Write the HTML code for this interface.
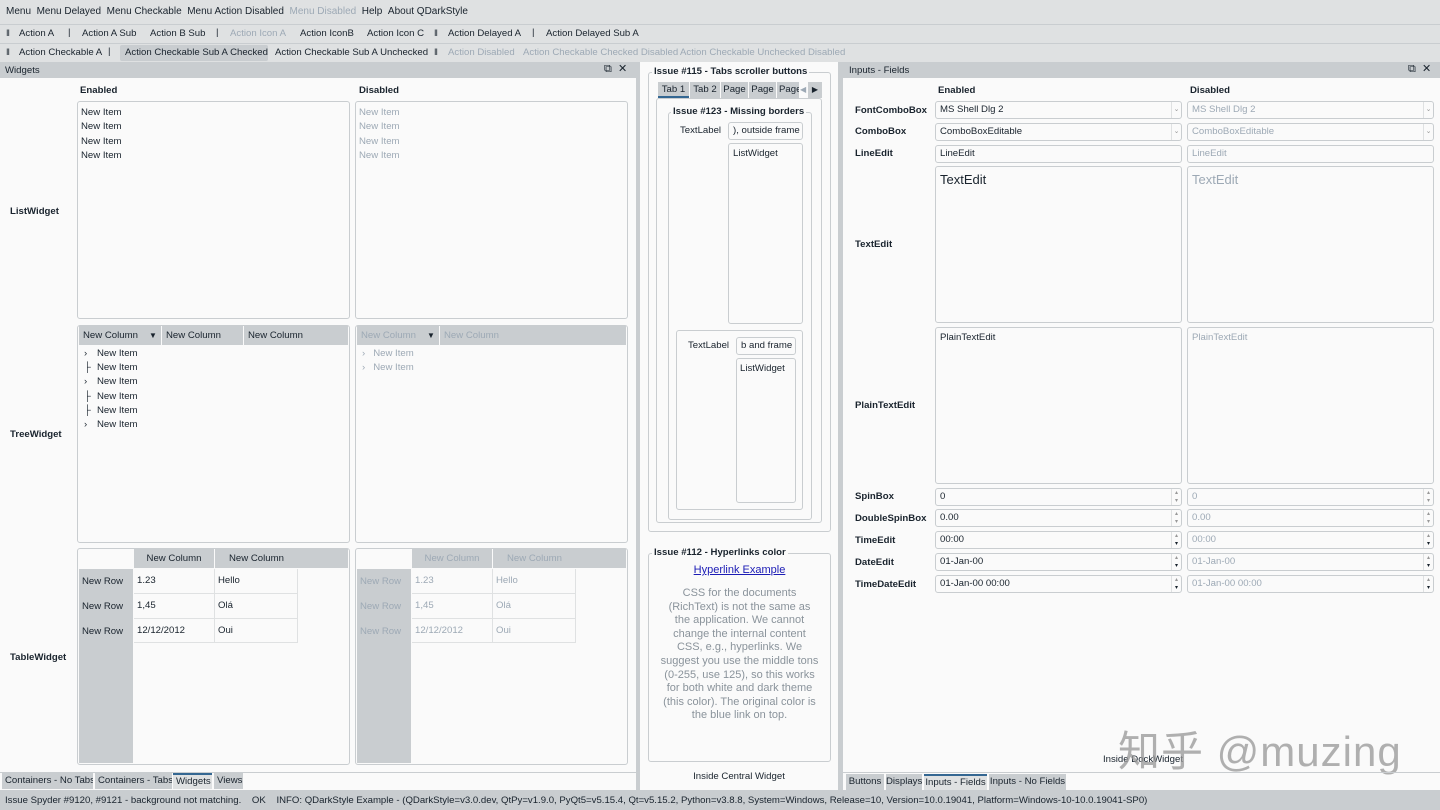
<!DOCTYPE html>
<html><head><meta charset="utf-8"><style>
*{box-sizing:border-box;margin:0;padding:0}
body{width:1440px;height:810px;position:relative;background:#fafafa;font-family:"Liberation Sans","DejaVu Sans",sans-serif;font-size:9.6px;color:#19232d;overflow:hidden}
.a{position:absolute;white-space:nowrap}
.bx{position:absolute;border:1px solid #c9cdd0;border-radius:3px;background:#fafafa}
.b{font-weight:bold}
.d{color:#9da9b5}
.hd{position:absolute;background:#c9cdd0;height:19px;line-height:19px;padding-left:4px}
.cell{position:absolute;border-right:1px solid #dfe1e2;border-bottom:1px solid #dfe1e2;padding-left:3px;line-height:24px}
.fld{position:absolute;border:1px solid #c9cdd0;border-radius:3px;height:18px;line-height:16px;padding-left:4px;background:#fafafa;overflow:hidden}
.sp{position:absolute;right:0;top:0;width:10px;height:16px;border-left:1px solid #dfe1e2;font-size:6px;color:#999;text-align:center;line-height:8px}
.tab{position:absolute;background:#c9cdd0;height:16px;line-height:16px;padding:0 3px;top:0;overflow:hidden;text-align:center}
.on{background:#dfe1e2;border-top:2px solid #346792;line-height:14px}
</style></head><body>
<div class="a" style="left:0;top:0;width:1440px;height:24px;background:#dfe1e2"></div>
<div class="a" style="left:6px;top:6px;font-size:10px">Menu&nbsp;&nbsp;Menu Delayed&nbsp;&nbsp;Menu Checkable&nbsp;&nbsp;Menu Action Disabled&nbsp;&nbsp;<span class="d">Menu Disabled</span>&nbsp;&nbsp;Help&nbsp;&nbsp;About QDarkStyle</div>
<div class="a" style="left:0;top:24px;width:1440px;height:38px;background:#dfe1e2;border-top:1px solid #c9cdd0"></div>
<div class="a" style="left:0;top:43px;width:1440px;height:1px;background:#c9cdd0"></div>
<div class="a" style="left:6px;top:28px">‖</div>
<div class="a" style="left:19px;top:28px">Action A</div>
<div class="a" style="left:68px;top:27px">|</div>
<div class="a" style="left:82px;top:28px">Action A Sub</div>
<div class="a" style="left:150px;top:28px">Action B Sub</div>
<div class="a" style="left:216px;top:27px">|</div>
<div class="a d" style="left:230px;top:28px">Action Icon A</div>
<div class="a" style="left:300px;top:28px">Action IconB</div>
<div class="a" style="left:367px;top:28px">Action Icon C</div>
<div class="a" style="left:434px;top:28px">‖</div>
<div class="a" style="left:448px;top:28px">Action Delayed A</div>
<div class="a" style="left:532px;top:27px">|</div>
<div class="a" style="left:546px;top:28px">Action Delayed Sub A</div>
<div class="a" style="left:120px;top:45px;width:148px;height:16px;background:#c9cdd0;border-radius:2px"></div>
<div class="a" style="left:6px;top:47px">‖</div>
<div class="a" style="left:19px;top:47px">Action Checkable A</div>
<div class="a" style="left:108px;top:46px">|</div>
<div class="a" style="left:125px;top:47px">Action Checkable Sub A Checked</div>
<div class="a" style="left:275px;top:47px">Action Checkable Sub A Unchecked</div>
<div class="a" style="left:434px;top:47px">‖</div>
<div class="a d" style="left:448px;top:47px">Action Disabled</div>
<div class="a d" style="left:523px;top:47px">Action Checkable Checked Disabled</div>
<div class="a d" style="left:680px;top:47px">Action Checkable Unchecked Disabled</div>
<div class="a" style="left:0;top:62px;width:636px;height:16px;background:#c9cdd0"></div>
<div class="a" style="left:5px;top:65px">Widgets</div>
<div class="a" style="left:604px;top:62px;font-size:11px">⧉&nbsp;&nbsp;✕</div>
<div class="a" style="left:636px;top:62px;width:4px;height:728px;background:#c9cdd0"></div>
<div class="a" style="left:838px;top:62px;width:5px;height:728px;background:#c9cdd0"></div>
<div class="a" style="left:843px;top:62px;width:597px;height:16px;background:#c9cdd0"></div>
<div class="a" style="left:849px;top:65px">Inputs - Fields</div>
<div class="a" style="left:1408px;top:62px;font-size:11px">⧉&nbsp;&nbsp;✕</div>
<div class="a b" style="left:80px;top:85px">Enabled</div>
<div class="a b" style="left:359px;top:85px">Disabled</div>
<div class="a b" style="left:10px;top:206px">ListWidget</div>
<div class="a b" style="left:10px;top:429px">TreeWidget</div>
<div class="a b" style="left:10px;top:652px">TableWidget</div>
<div class="bx" style="left:77px;top:101px;width:273px;height:218px"></div>
<div class="a" style="left:81px;top:106px;line-height:14.3px">New Item<br>New Item<br>New Item<br>New Item</div>
<div class="bx" style="left:355px;top:101px;width:273px;height:218px"></div>
<div class="a d" style="left:359px;top:106px;line-height:14.3px">New Item<br>New Item<br>New Item<br>New Item</div>
<div class="bx" style="left:77px;top:325px;width:273px;height:218px"></div>
<div class="hd" style="left:79px;top:326px;width:82px">New Column <span style="position:absolute;left:70px;font-size:8px">▼</span></div>
<div class="hd" style="left:162px;top:326px;width:81px">New Column</div>
<div class="hd" style="left:244px;top:326px;width:104px">New Column</div>
<div class="a" style="left:84px;top:347px;line-height:14.2px">›<br>├<br>›<br>├<br>├<br>›</div>
<div class="a" style="left:97px;top:347px;line-height:14.2px">New Item<br>New Item<br>New Item<br>New Item<br>New Item<br>New Item</div>
<div class="bx" style="left:355px;top:325px;width:273px;height:218px"></div>
<div class="hd d" style="left:357px;top:326px;width:82px">New Column <span style="position:absolute;left:70px;font-size:8px;color:#19232d">▼</span></div>
<div class="hd d" style="left:440px;top:326px;width:186px">New Column</div>
<div class="a d" style="left:362px;top:347px;line-height:14.2px">›&nbsp;&nbsp;&nbsp;New Item<br>›&nbsp;&nbsp;&nbsp;New Item</div>
<div class="bx" style="left:77px;top:548px;width:273px;height:217px"></div>
<div class="a" style="left:79px;top:569px;width:54px;height:194px;background:#c9cdd0"></div>
<div class="hd" style="left:134px;top:549px;width:80px;text-align:center;padding:0">New Column</div>
<div class="hd" style="left:215px;top:549px;width:133px;padding-left:14px">New Column</div>
<div class="a" style="left:82px;top:569px;line-height:25px">New Row<br>New Row<br>New Row</div>
<div class="cell" style="left:134px;top:569px;width:81px;height:25px">1.23</div>
<div class="cell" style="left:215px;top:569px;width:83px;height:25px">Hello</div>
<div class="cell" style="left:134px;top:594px;width:81px;height:25px">1,45</div>
<div class="cell" style="left:215px;top:594px;width:83px;height:25px">Olá</div>
<div class="cell" style="left:134px;top:619px;width:81px;height:24px">12/12/2012</div>
<div class="cell" style="left:215px;top:619px;width:83px;height:24px">Oui</div>
<div class="bx" style="left:355px;top:548px;width:273px;height:217px"></div>
<div class="a" style="left:357px;top:569px;width:54px;height:194px;background:#c9cdd0"></div>
<div class="hd d" style="left:412px;top:549px;width:80px;text-align:center;padding:0">New Column</div>
<div class="hd d" style="left:493px;top:549px;width:133px;padding-left:14px">New Column</div>
<div class="a d" style="left:360px;top:569px;line-height:25px">New Row<br>New Row<br>New Row</div>
<div class="cell d" style="left:412px;top:569px;width:81px;height:25px">1.23</div>
<div class="cell d" style="left:493px;top:569px;width:83px;height:25px">Hello</div>
<div class="cell d" style="left:412px;top:594px;width:81px;height:25px">1,45</div>
<div class="cell d" style="left:493px;top:594px;width:83px;height:25px">Olá</div>
<div class="cell d" style="left:412px;top:619px;width:81px;height:24px">12/12/2012</div>
<div class="cell d" style="left:493px;top:619px;width:83px;height:24px">Oui</div>
<div class="a" style="left:0;top:772px;width:636px;height:1px;background:#c9cdd0"></div>
<div class="a" style="left:0;top:773px;height:17px;width:636px">
<div class="tab" style="left:2px;width:91px">Containers - No Tabs</div>
<div class="tab" style="left:95px;width:77px">Containers - Tabs</div>
<div class="tab on" style="left:173px;width:39px">Widgets</div>
<div class="tab" style="left:214px;width:29px">Views</div></div>
<!-- middle -->
<div class="bx" style="left:648px;top:72px;width:183px;height:460px"></div>
<div class="a b" style="left:652px;top:66px;background:#fafafa;padding:0 2px">Issue #115 - Tabs scroller buttons</div>
<div class="a" style="left:658px;top:82px;height:16px;width:165px">
<div class="tab" style="left:0;width:31px;border-bottom:2px solid #346792;line-height:15px">Tab 1</div>
<div class="tab" style="left:32px;width:30px">Tab 2</div>
<div class="tab" style="left:63px;width:27px;padding:0">Page</div>
<div class="tab" style="left:91px;width:27px;padding:0">Page</div>
<div class="tab" style="left:119px;width:22px;padding:0 0 0 2px;text-align:left">Page</div>
<div class="a d" style="left:142px;top:0;font-size:8px;line-height:16px">◀</div>
<div class="a" style="left:150px;top:0;width:14px;height:16px;background:#c9cdd0;font-size:8px;line-height:16px;text-align:center">▶</div></div>
<div class="bx" style="left:656px;top:98px;width:166px;height:425px"></div>
<div class="bx" style="left:668px;top:112px;width:144px;height:408px"></div>
<div class="a b" style="left:671px;top:106px;background:#fafafa;padding:0 2px">Issue #123 - Missing borders</div>
<div class="a" style="left:680px;top:125px">TextLabel</div>
<div class="fld" style="left:728px;top:122px;width:75px">), outside frame</div>
<div class="bx" style="left:728px;top:143px;width:75px;height:181px"></div>
<div class="a" style="left:733px;top:148px">ListWidget</div>
<div class="bx" style="left:676px;top:330px;width:127px;height:180px"></div>
<div class="a" style="left:688px;top:340px">TextLabel</div>
<div class="fld" style="left:736px;top:337px;width:60px">b and frame</div>
<div class="bx" style="left:736px;top:358px;width:60px;height:145px"></div>
<div class="a" style="left:740px;top:363px">ListWidget</div>
<div class="bx" style="left:648px;top:553px;width:183px;height:209px"></div>
<div class="a b" style="left:652px;top:547px;background:#fafafa;padding:0 2px">Issue #112 - Hyperlinks color</div>
<div class="a" style="left:648px;top:564px;width:183px;text-align:center;font-size:11px;text-decoration:underline;color:#1b1bb5">Hyperlink Example</div>
<div class="a" style="left:660px;top:587px;width:159px;text-align:center;white-space:normal;font-size:11px;line-height:13.6px;color:#8a939b">CSS for the documents (RichText) is not the same as the application. We cannot change the internal content CSS, e.g., hyperlinks. We suggest you use the middle tons (0-255, use 125), so this works for both white and dark theme (this color). The original color is the blue link on top.</div>
<div class="a" style="left:640px;top:771px;width:198px;text-align:center">Inside Central Widget</div>
<!-- right dock -->
<div class="a b" style="left:938px;top:85px">Enabled</div>
<div class="a b" style="left:1190px;top:85px">Disabled</div>
<div class="a b" style="left:855px;top:105px">FontComboBox</div>
<div class="a b" style="left:855px;top:126px">ComboBox</div>
<div class="a b" style="left:855px;top:148px">LineEdit</div>
<div class="a b" style="left:855px;top:239px">TextEdit</div>
<div class="a b" style="left:855px;top:400px">PlainTextEdit</div>
<div class="a b" style="left:855px;top:491px">SpinBox</div>
<div class="a b" style="left:855px;top:513px">DoubleSpinBox</div>
<div class="a b" style="left:855px;top:535px">TimeEdit</div>
<div class="a b" style="left:855px;top:557px">DateEdit</div>
<div class="a b" style="left:855px;top:579px">TimeDateEdit</div>
<div class="fld" style="left:935px;top:101px;width:247px">MS Shell Dlg 2<span class="sp" style="font-size:7px;line-height:16px">⌄</span></div>
<div class="fld" style="left:935px;top:123px;width:247px">ComboBoxEditable<span class="sp" style="font-size:7px;line-height:16px">⌄</span></div>
<div class="fld" style="left:935px;top:145px;width:247px">LineEdit</div>
<div class="bx" style="left:935px;top:166px;width:247px;height:157px"></div>
<div class="a" style="left:940px;top:172px;font-size:13px">TextEdit</div>
<div class="bx" style="left:935px;top:327px;width:247px;height:157px"></div>
<div class="a" style="left:940px;top:332px">PlainTextEdit</div>
<div class="fld d" style="left:1187px;top:101px;width:247px">MS Shell Dlg 2<span class="sp" style="font-size:7px;line-height:16px">⌄</span></div>
<div class="fld d" style="left:1187px;top:123px;width:247px">ComboBoxEditable<span class="sp" style="font-size:7px;line-height:16px">⌄</span></div>
<div class="fld d" style="left:1187px;top:145px;width:247px">LineEdit</div>
<div class="bx" style="left:1187px;top:166px;width:247px;height:157px"></div>
<div class="a d" style="left:1192px;top:172px;font-size:13px">TextEdit</div>
<div class="bx" style="left:1187px;top:327px;width:247px;height:157px"></div>
<div class="a d" style="left:1192px;top:332px">PlainTextEdit</div>
<div class="fld" style="left:935px;top:488px;width:247px">0<span class="sp">▴<br>▾</span></div>
<div class="fld" style="left:935px;top:509px;width:247px">0.00<span class="sp">▴<br>▾</span></div>
<div class="fld" style="left:935px;top:531px;width:247px">00:00<span class="sp">▴<br><b style="color:#19232d">▾</b></span></div>
<div class="fld" style="left:935px;top:553px;width:247px">01-Jan-00<span class="sp">▴<br><b style="color:#19232d">▾</b></span></div>
<div class="fld" style="left:935px;top:575px;width:247px">01-Jan-00 00:00<span class="sp">▴<br><b style="color:#19232d">▾</b></span></div>
<div class="fld d" style="left:1187px;top:488px;width:247px">0<span class="sp">▴<br>▾</span></div>
<div class="fld d" style="left:1187px;top:509px;width:247px">0.00<span class="sp">▴<br>▾</span></div>
<div class="fld d" style="left:1187px;top:531px;width:247px">00:00<span class="sp">▴<br><b style="color:#19232d">▾</b></span></div>
<div class="fld d" style="left:1187px;top:553px;width:247px">01-Jan-00<span class="sp">▴<br><b style="color:#19232d">▾</b></span></div>
<div class="fld d" style="left:1187px;top:575px;width:247px">01-Jan-00 00:00<span class="sp">▴<br><b style="color:#19232d">▾</b></span></div>
<div class="a" style="left:1103px;top:754px">Inside DockWidget</div>
<div class="a" style="left:1118px;top:718px;font-size:42px;letter-spacing:1px;color:rgba(150,150,150,0.75);font-family:'Liberation Sans','Noto Sans CJK SC',sans-serif">知乎 @muzing</div>
<div class="a" style="left:843px;top:772px;width:597px;height:1px;background:#c9cdd0"></div>
<div class="a" style="left:0;top:774px;height:16px;width:1440px">
<div class="tab" style="left:846px;width:38px;padding:0">Buttons</div>
<div class="tab" style="left:886px;width:36px;padding:0">Displays</div>
<div class="tab on" style="left:924px;width:63px;padding:0">Inputs - Fields</div>
<div class="tab" style="left:989px;width:77px;padding:0">Inputs - No Fields</div></div>
<div class="a" style="left:0;top:790px;width:1440px;height:20px;background:#c9cdd0"></div>
<div class="a" style="left:5px;top:795px">Issue Spyder #9120, #9121 - background not matching.&nbsp;&nbsp;&nbsp;&nbsp;OK&nbsp;&nbsp;&nbsp;&nbsp;INFO: QDarkStyle Example - (QDarkStyle=v3.0.dev, QtPy=v1.9.0, PyQt5=v5.15.4, Qt=v5.15.2, Python=v3.8.8, System=Windows, Release=10, Version=10.0.19041, Platform=Windows-10-10.0.19041-SP0)</div>
</body></html>
